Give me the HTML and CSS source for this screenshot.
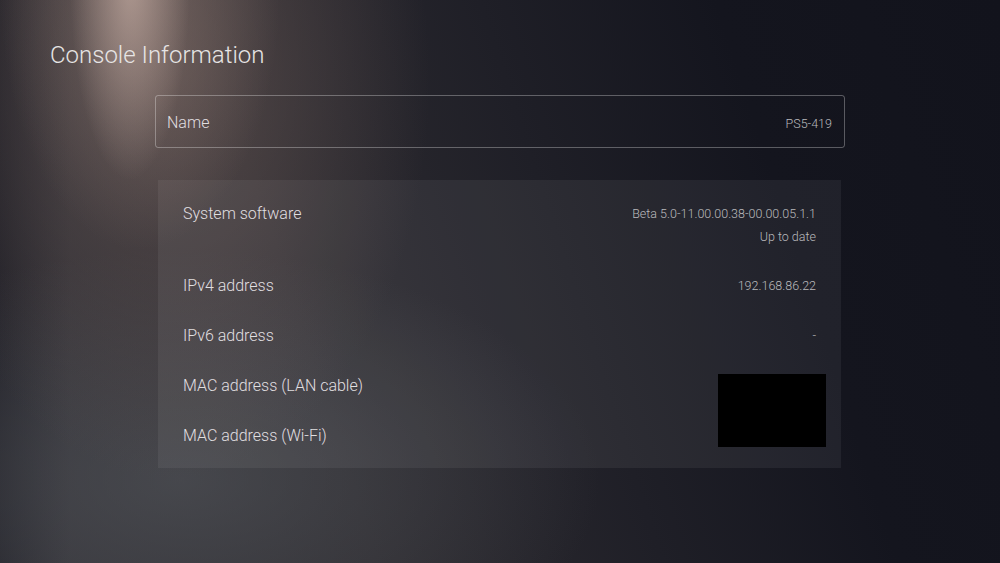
FILE: index.html
```html
<!DOCTYPE html>
<html>
    <head>
        <meta charset="UTF-8">
        <meta name="viewport" content="width=device-width, initial-scale=1.0">
        <link rel="stylesheet" href="styles.css">
        <title>Console Information</title>
    </head>
    <body>

        <div id="screen">
            <h1 class="title">Console Information</h1>

            <div class="content">
                <div class="namebox">
                    <span class="label">Name</span>
                    <span class="value">PS5-419</span>
                </div>

                <div class="panel">
                    <div class="row">
                        <span class="label">System software</span>
                        <div class="values">
                            <span class="value">Beta 5.0-11.00.00.38-00.00.05.1.1</span>
                            <span class="value sub">Up to date</span>
                        </div>
                    </div>
                    <div class="row">
                        <span class="label">IPv4 address</span>
                        <span class="value">192.168.86.22</span>
                    </div>
                    <div class="row">
                        <span class="label">IPv6 address</span>
                        <span class="value">-</span>
                    </div>
                    <div class="row">
                        <span class="label">MAC address (LAN cable)</span>
                    </div>
                    <div class="row">
                        <span class="label">MAC address (Wi-Fi)</span>
                    </div>

                    <div class="redact"></div>
                </div>
            </div>
        </div>

    </body>
</html>
```

FILE: styles.css
```css
body {
    margin: 0;
    padding: 0;
    width: 1000px;
    height: 563px;
    overflow: hidden;
    background: #12131c;
    font-family: Roboto, "Noto Sans", sans-serif;
    font-weight: 300;
    color: #e2e2e2;
}

#screen {
    box-sizing: border-box;
    width: 1000px;
    height: 563px;
    padding: 40px 0 0 50px;
    background:
        radial-gradient(ellipse 60px 200px at 130px -20px, rgba(205, 180, 170, 0.65), rgba(205, 180, 170, 0) 100%),
        radial-gradient(ellipse 140px 260px at 140px -10px, rgba(150, 128, 120, 0.5), rgba(150, 128, 120, 0) 100%),
        radial-gradient(ellipse 260px 400px at 170px 80px, rgba(104, 88, 85, 0.65), rgba(104, 88, 85, 0) 100%),
        radial-gradient(ellipse 420px 230px at 180px 480px, rgba(84, 87, 92, 0.6), rgba(84, 87, 92, 0) 100%),
        linear-gradient(90deg, rgba(22, 22, 30, 0.6) 0, rgba(22, 22, 30, 0) 70px),
        linear-gradient(72deg, #35343a 0%, #2e2c31 32%, #1f1f27 56%, #14151e 76%, #12131c 100%);
}

.title {
    margin: 0;
    font-size: 24px;
    font-weight: 300;
    line-height: 30px;
    color: #e6e4e4;
}

.content {
    width: 690px;
    margin: 25px 0 0 105px;
}

.namebox {
    display: flex;
    justify-content: space-between;
    align-items: center;
    box-sizing: border-box;
    height: 53px;
    padding: 2px 12px 0 11px;
    border: 1px solid rgba(255, 255, 255, 0.3);
    border-radius: 3px;
}

.label {
    font-size: 16px;
    line-height: 24px;
    color: #e0dfe0;
}

.value {
    font-size: 12.5px;
    line-height: 24px;
    color: #b9b9bc;
}

.namebox .value {
    padding-top: 3px;
}

.panel {
    position: relative;
    box-sizing: border-box;
    width: 683px;
    margin: 32px 0 0 3px;
    padding: 9px 25px 7px;
    background: rgba(255, 255, 255, 0.06);
}

.row {
    display: flex;
    justify-content: space-between;
    align-items: flex-start;
    padding: 13px 0;
}

.values {
    display: flex;
    flex-direction: column;
    align-items: flex-end;
}

.value.sub {
    line-height: 22px;
}

.redact {
    position: absolute;
    top: 194px;
    right: 15px;
    width: 108px;
    height: 73px;
    background: #000;
}
```
